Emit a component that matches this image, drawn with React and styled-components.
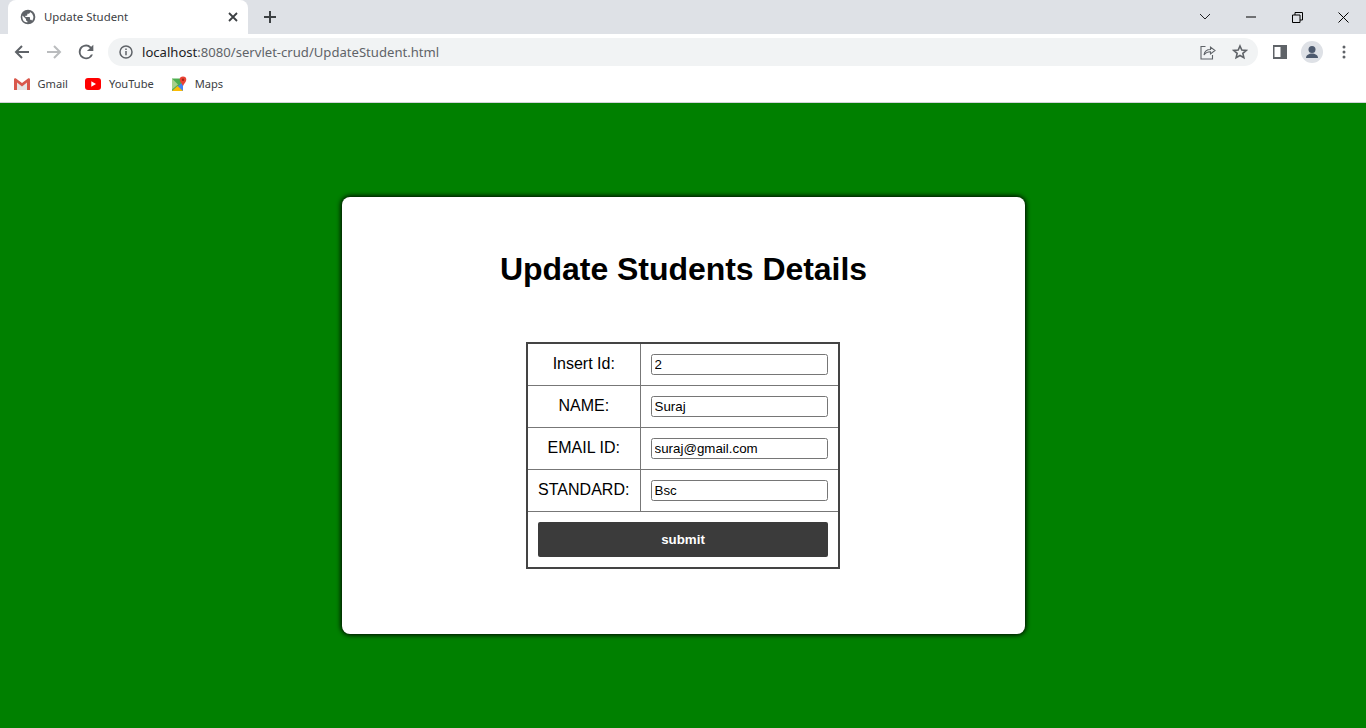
import React from "react";
import styled, { createGlobalStyle } from "styled-components";

const Global = createGlobalStyle`
  html, body { margin: 0; padding: 0; height: 100%; overflow: hidden; }
  #root { height: 728px; }
  * { box-sizing: border-box; }
`;

const Page = styled.div`
  width: 1366px; height: 728px; display: flex; flex-direction: column;
  font-family: "Liberation Sans", Arial, sans-serif; background: #008000;
`;
const Chrome = styled.header`
  height: 103px; flex: none; background: #fff; border-bottom: 1px solid #d0d3d8;
  display: flex; flex-direction: column;
`;
const TabStrip = styled.div`
  height: 34px; flex: none; background: #dee1e6; display: flex; align-items: flex-end; padding-left: 8px;
`;
const Tab = styled.div`
  width: 240px; height: 34px; background: #fff; border-radius: 8px 8px 0 0;
  display: flex; align-items: center; padding: 0 10px 1px 12px; gap: 8px; font-size: 11.4px; color: #3c4043;
  font-family: "Noto Sans", sans-serif;
`;
const TabTitle = styled.span` flex: 1; `;
const NewTab = styled.div`
  width: 28px; height: 28px; margin: 0 0 3px 8px; display: flex; align-items: center; justify-content: center;
`;
const Spacer = styled.div` flex: 1; `;
const WinButtons = styled.div`
  align-self: stretch; display: flex; align-items: center;
`;
const WinBtn = styled.div`
  width: 46px; height: 28px; display: flex; align-items: center; justify-content: center;
`;
const Toolbar = styled.div`
  height: 35px; flex: none; display: flex; align-items: center; padding: 1px 0 0 6px;
`;
const NavBtn = styled.div`
  width: 32px; height: 32px; display: flex; align-items: center; justify-content: center;
  margin-left: ${p => p.$gap || 0}px;
`;
const Omnibox = styled.div`
  margin-left: 6px; width: 1150px; height: 28px; border-radius: 14px; background: #f1f3f4;
  display: flex; align-items: center; padding: 0 2px 0 11px; color: #5f6368;
  font-family: "Noto Sans", sans-serif;
`;
const Url = styled.span`
  margin-left: 9px; flex: 1; font-size: 13.1px;
  b { font-weight: 400; color: #202124; }
`;
const OmniIcon = styled.div`
  width: 32px; height: 28px; display: flex; align-items: center; justify-content: center;
`;
const Bookmarks = styled.div`
  height: 33px; flex: none; display: flex; align-items: center; padding: 0 0 4px 14px; gap: 17.5px;
  font-size: 11.1px; color: #3c4043; font-family: "Noto Sans", sans-serif;
`;
const Bookmark = styled.div`
  display: flex; align-items: center; gap: 7.5px;
`;
const Main = styled.main`
  flex: 1; display: flex; justify-content: center; padding-top: 94px; padding-left: 1px;
`;
const Card = styled.section`
  width: 683px; height: 437px; background: #fff; border-radius: 8px; box-shadow: 0 0 5px 1px #000;
  display: flex; flex-direction: column; align-items: center; padding-top: 52px;
`;
const Title = styled.h1`
  margin: 0 0 53px; font-size: 32px; line-height: 40px; font-weight: 700; color: #000; letter-spacing: -.04px;
`;
const Table = styled.table`
  width: 314px; margin-right: 1px; border-collapse: collapse; border: 2px solid #444; table-layout: fixed;
`;
const Row = styled.tr` height: 42px; `;
const LabelCell = styled.td`
  width: 113px; border: 1px solid #777; text-align: center; font-size: 16px; color: #000; padding: 0;
`;
const FieldCell = styled.td`
  border: 1px solid #777; padding: 0 0 0 10px;
`;
const Input = styled.input`
  display: block; width: 177px; height: 21px; border: 1px solid #767676; border-radius: 2.5px; padding: 1px 3px;
  font: 13.33px "Liberation Sans", Arial, sans-serif; color: #000; background: #fff; outline: none;
`;
const SubmitCell = styled.td`
  border: 1px solid #777; padding: 10px;
`;
const Submit = styled.button`
  display: block; width: 100%; height: 35px; border: 0; border-radius: 2px; background: #3b3b3b; color: #fff;
  font: 700 13.33px "Liberation Sans", Arial, sans-serif; padding: 0;
`;

const rows = [
  ["Insert Id:", "2"],
  ["NAME:", "Suraj"],
  ["EMAIL ID:", "suraj@gmail.com"],
  ["STANDARD:", "Bsc"],
];

export default function App() {
  return (
    <Page>
      <Global />
      <Chrome>
        <TabStrip>
          <Tab>
            <svg width="16" height="16" viewBox="0 0 24 24"><path fill="#5f6368" d="M12 1a11 11 0 1 0 0 22 11 11 0 0 0 0-22zM3.500 12c0-.8.1-1.500.3-2.200L9 15v1c0 1.100.9 2 2 2v2.400A8.500 8.500 0 0 1 3.500 12zm14.700 5.700c-.3-.8-1-1.700-2.200-1.700h-1v-3c0-.6-.4-1-1-1H8v-2h2c.6 0 1-.4 1-1V7h2c1.100 0 2-.9 2-2v-.4a8.500 8.500 0 0 1 3.200 13.100z"/></svg>
            <TabTitle>Update Student</TabTitle>
            <svg width="10" height="10" viewBox="0 0 10 10"><path d="M1 1l8 8M9 1l-8 8" stroke="#3c4043" strokeWidth="1.800"/></svg>
          </Tab>
          <NewTab>
            <svg width="14" height="14" viewBox="0 0 14 14"><path d="M7 1v12M1 7h12" stroke="#3c4043" strokeWidth="2"/></svg>
          </NewTab>
          <Spacer />
          <WinButtons>
            <WinBtn>
              <svg width="12" height="8" viewBox="0 0 12 8"><path d="M1 1l5 5 5-5" fill="none" stroke="#202124" strokeWidth="1"/></svg>
            </WinBtn>
            <WinBtn>
              <svg width="10" height="2" viewBox="0 0 10 2"><path d="M0 1h10" stroke="#000" strokeWidth="1"/></svg>
            </WinBtn>
            <WinBtn>
              <svg width="11" height="11" viewBox="0 0 11 11"><path d="M.5 3h7.500v7.500H.5zM3 3V.5h7.500V8H8" fill="none" stroke="#000" strokeWidth="1"/></svg>
            </WinBtn>
            <WinBtn>
              <svg width="11" height="11" viewBox="0 0 11 11"><path d="M.5.5l10 10M10.500.5l-10 10" stroke="#000" strokeWidth="1"/></svg>
            </WinBtn>
          </WinButtons>
        </TabStrip>
        <Toolbar>
          <NavBtn>
            <svg width="16" height="16" viewBox="0 0 16 16"><path d="M15 8H2M8 2L2 8l6 6" fill="none" stroke="#5f6368" strokeWidth="2"/></svg>
          </NavBtn>
          <NavBtn>
            <svg width="16" height="16" viewBox="0 0 16 16"><path d="M1 8h13M8 2l6 6-6 6" fill="none" stroke="#babcbe" strokeWidth="2"/></svg>
          </NavBtn>
          <NavBtn>
            <svg width="16" height="16" viewBox="0 0 24 24"><path fill="#5f6368" d="M19.800 4.200A11 11 0 0 0 1.100 12a11 11 0 0 0 21.300 3.700h-2.900a8.200 8.200 0 1 1-7.500-11.900c2.300 0 4.300 1 5.800 2.400L13.400 10.600H23V1z"/></svg>
          </NavBtn>
          <Omnibox>
            <svg width="14" height="14" viewBox="0 0 14 14"><circle cx="7" cy="7" r="6" fill="none" stroke="#5f6368" strokeWidth="1.500"/><path d="M7 6v4.200M7 3.500v1.500" stroke="#5f6368" strokeWidth="1.500"/></svg>
            <Url><b>localhost</b>:8080/servlet-crud/UpdateStudent.html</Url>
            <OmniIcon>
              <svg width="16" height="16" viewBox="0 0 16 16"><path d="M5.500 2.500H1v12.500h11.500v-4" fill="none" stroke="#5f6368" strokeWidth="1.100"/><path d="M4 11c.5-3.500 3-5.500 6.500-5.500V3L15 6.500 10.500 10V7.700C8 7.700 5.500 8.500 4 11z" fill="none" stroke="#5f6368" strokeWidth="1.100"/></svg>
            </OmniIcon>
            <OmniIcon>
              <svg width="16" height="16" viewBox="0 0 24 24"><path d="M12 3l2.700 6.100 6.600.6-5 4.400 1.500 6.500L12 17.200l-5.800 3.400 1.500-6.500-5-4.400 6.600-.6z" fill="none" stroke="#5f6368" strokeWidth="2.400"/></svg>
            </OmniIcon>
          </Omnibox>
          <NavBtn $gap={6}>
            <svg width="14" height="14" viewBox="0 0 14 14"><path fillRule="evenodd" fill="#5f6368" d="M0 0h14v14H0zM1.500 2v10h6V2z"/></svg>
          </NavBtn>
          <NavBtn>
            <svg width="22" height="22" viewBox="0 0 22 22"><circle cx="11" cy="11" r="11" fill="#dee1e6"/><circle cx="11" cy="8.500" r="3.500" fill="#4d5a6e"/><path d="M5 17c0-3 3-4.500 6-4.500s6 1.500 6 4.500z" fill="#4d5a6e"/></svg>
          </NavBtn>
          <NavBtn>
            <svg width="4" height="14" viewBox="0 0 4 14"><circle cx="2" cy="2" r="1.500" fill="#5f6368"/><circle cx="2" cy="7" r="1.500" fill="#5f6368"/><circle cx="2" cy="12" r="1.500" fill="#5f6368"/></svg>
          </NavBtn>
        </Toolbar>
        <Bookmarks>
          <Bookmark>
            <svg width="16" height="12" viewBox="0 0 16 12"><path d="M3 12V4l5 4 5-4v8z" fill="#e6e6e6"/><path d="M0 1.500C0 .5 1.200-.2 2 .5L8 5l6-4.500c.8-.7 2 0 2 1V12h-3V4.500L8 8.400 3 4.500V12H0z" fill="#d9584c"/></svg>
            <span>Gmail</span>
          </Bookmark>
          <Bookmark>
            <svg width="16" height="12" viewBox="0 0 16 12"><rect width="16" height="12" rx="3" fill="#f00"/><path d="M6.300 3.300v5.400L11 6z" fill="#fff"/></svg>
            <span>YouTube</span>
          </Bookmark>
          <Bookmark>
            <svg width="16" height="16" viewBox="0 0 16 16"><path d="M1 2.500h11V15H1z" fill="#4caf50"/><path d="M1 15L12 6v9z" fill="#4285f4"/><path d="M1 15l5.500-5L12 15z" fill="#fbbc04"/><path d="M1 2.500l6 6-6 5z" fill="#a7d08c"/><path d="M12 .5a3.300 3.300 0 0 0-3.300 3.300C8.700 6 11 7.500 12 10c1-2.500 3.300-4 3.300-6.200A3.300 3.300 0 0 0 12 .5z" fill="#ea4335"/><circle cx="12" cy="3.800" r="1.200" fill="#a52714"/></svg>
            <span>Maps</span>
          </Bookmark>
        </Bookmarks>
      </Chrome>
      <Main>
        <Card>
          <Title>Update Students Details</Title>
          <Table>
            <tbody>
              {rows.map(([label, value]) => (
                <Row key={label}>
                  <LabelCell>{label}</LabelCell>
                  <FieldCell><Input defaultValue={value} /></FieldCell>
                </Row>
              ))}
              <tr>
                <SubmitCell colSpan={2}><Submit>submit</Submit></SubmitCell>
              </tr>
            </tbody>
          </Table>
        </Card>
      </Main>
    </Page>
  );
}
